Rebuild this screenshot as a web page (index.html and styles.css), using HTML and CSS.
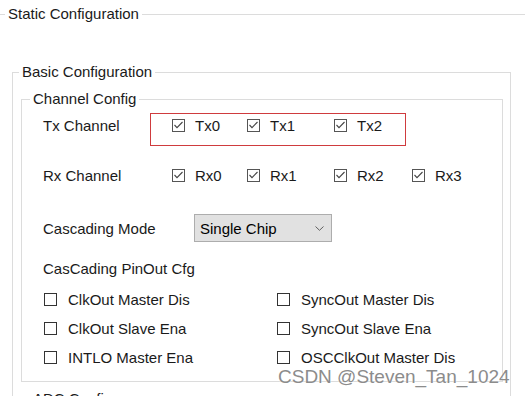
FILE: index.html
```html
<!DOCTYPE html>
<html lang="en">
<head>
    <meta charset="UTF-8">
    <title>Static Configuration</title>
    <link rel="stylesheet" href="styles.css">
</head>
<body>
    <fieldset class="group static-group">
        <legend>Static Configuration</legend>

        <fieldset class="group basic-group">
            <legend>Basic Configuration</legend>

            <fieldset class="group channel-group">
                <legend>Channel Config</legend>

                <div class="channel-body">
                    <div class="row chan-row tx-row">
                        <span class="row-label">Tx Channel</span>
                        <label class="check"><span class="box on"><svg viewBox="0 0 11 11"><polyline points="1.5,5 4,7.6 9.5,2"/></svg></span>Tx0</label>
                        <label class="check"><span class="box on"><svg viewBox="0 0 11 11"><polyline points="1.5,5 4,7.6 9.5,2"/></svg></span>Tx1</label>
                        <label class="check"><span class="box on"><svg viewBox="0 0 11 11"><polyline points="1.5,5 4,7.6 9.5,2"/></svg></span>Tx2</label>
                    </div>

                    <div class="row chan-row rx-row">
                        <span class="row-label">Rx Channel</span>
                        <label class="check"><span class="box on"><svg viewBox="0 0 11 11"><polyline points="1.5,5 4,7.6 9.5,2"/></svg></span>Rx0</label>
                        <label class="check"><span class="box on"><svg viewBox="0 0 11 11"><polyline points="1.5,5 4,7.6 9.5,2"/></svg></span>Rx1</label>
                        <label class="check"><span class="box on"><svg viewBox="0 0 11 11"><polyline points="1.5,5 4,7.6 9.5,2"/></svg></span>Rx2</label>
                        <label class="check"><span class="box on"><svg viewBox="0 0 11 11"><polyline points="1.5,5 4,7.6 9.5,2"/></svg></span>Rx3</label>
                    </div>

                    <div class="row mode-row">
                        <span class="row-label">Cascading Mode</span>
                        <div class="combo">
                            <span>Single Chip</span>
                            <svg class="combo-arrow" width="9" height="5" viewBox="0 0 9 5">
                                <polyline points="0.5,0.5 4.5,4.3 8.5,0.5" fill="none" stroke="#606060" stroke-width="1"/>
                            </svg>
                        </div>
                    </div>

                    <div class="row pin-title">CasCading PinOut Cfg</div>

                    <div class="pin-grid">
                        <label class="check"><span class="box"></span>ClkOut Master Dis</label>
                        <label class="check"><span class="box"></span>SyncOut Master Dis</label>
                        <label class="check"><span class="box"></span>ClkOut Slave Ena</label>
                        <label class="check"><span class="box"></span>SyncOut Slave Ena</label>
                        <label class="check"><span class="box"></span>INTLO Master Ena</label>
                        <label class="check"><span class="box"></span>OSCClkOut Master Dis</label>
                    </div>
                </div>
            </fieldset>

            <fieldset class="group adc-group">
                <legend>ADC Config</legend>
            </fieldset>
        </fieldset>
    </fieldset>

    <!-- annotation + watermark drawn over the dialog -->
    <div class="mark-box"></div>
    <div class="watermark">CSDN @Steven_Tan_1024</div>
</body>
</html>
```

FILE: styles.css
```css
body {
    margin: 0;
    width: 525px;
    height: 396px;
    overflow: hidden;
    position: relative;
    background: #fff;
    color: #1a1a1a;
    font-family: "Liberation Sans", Arial, sans-serif;
    font-size: 15px;
}

.group {
    box-sizing: border-box;
    margin: 0;
    padding: 0;
    border: 1px solid #dcdcdc;
    min-width: 0;
}

.group legend {
    padding: 0 3px;
    line-height: 18px;
}

.static-group {
    margin-top: 5px;
    border-left: none;
    border-right: none;
    border-bottom: none;
}

.static-group > legend {
    margin-left: 5px;
}

.basic-group {
    margin: 40px 0 0 12px;
    width: 499px;
    border-bottom: none;
}

.basic-group > legend {
    margin-left: 6px;
}

.channel-group {
    margin: 9px 0 0 8px;
    width: 482px;
}

.channel-body {
    padding: 0 0 9px 21px;
}

.channel-group > legend,
.adc-group > legend {
    margin-left: 8px;
}

.adc-group {
    margin: 8px 0 0 8px;
    width: 482px;
    height: 40px;
}

.row {
    display: flex;
    align-items: center;
    height: 28px;
}

.chan-row {
    display: grid;
    grid-template-columns: 129px 75px 87px 78px auto;
    align-items: center;
}

.tx-row {
    margin-top: 3px;
}

.rx-row {
    margin-top: 22px;
}

.mode-row {
    margin-top: 25px;
}

.mode-row .row-label {
    width: 151px;
}

.pin-title {
    margin-top: 12px;
}

.pin-grid {
    display: grid;
    grid-template-columns: 233px auto;
    grid-auto-rows: 29px;
    align-items: center;
    margin-top: 3px;
}

.check {
    display: flex;
    align-items: center;
    gap: 10px;
    white-space: nowrap;
}

.pin-grid .check {
    gap: 11px;
    padding-left: 1px;
}

.box {
    box-sizing: border-box;
    width: 13px;
    height: 13px;
    border: 1px solid #333;
    background: #fff;
    flex: none;
}

.box.on {
    border-color: #555;
}

.box svg {
    display: block;
    width: 11px;
    height: 11px;
}

.box polyline {
    fill: none;
    stroke: #444;
    stroke-width: 1.1;
}

.combo {
    box-sizing: border-box;
    width: 138px;
    height: 28px;
    display: flex;
    align-items: center;
    justify-content: space-between;
    padding: 0 7px 0 5px;
    background: #e1e1e1;
    border: 1px solid #adadad;
    color: #000;
}

.mark-box {
    position: absolute;
    left: 150px;
    top: 113px;
    width: 256px;
    height: 33px;
    box-sizing: border-box;
    border: 1px solid #cf3b3e;
}

.watermark {
    position: absolute;
    left: 278px;
    top: 366px;
    font-size: 19px;
    color: #8c8c8c;
    text-shadow: 0 0 2px #fff;
    white-space: nowrap;
}
```
